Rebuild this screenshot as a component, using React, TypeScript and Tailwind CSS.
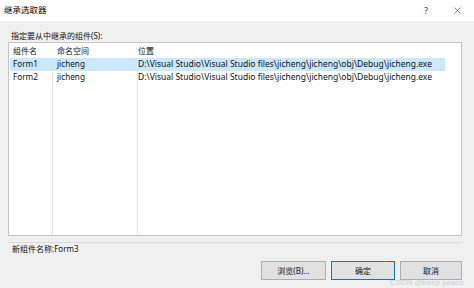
import { X } from 'lucide-react';

const rows = [
  { name: 'Form1', ns: 'jicheng', path: 'D:\\Visual Studio\\Visual Studio files\\jicheng\\jicheng\\obj\\Debug\\jicheng.exe', selected: true },
  { name: 'Form2', ns: 'jicheng', path: 'D:\\Visual Studio\\Visual Studio files\\jicheng\\jicheng\\obj\\Debug\\jicheng.exe', selected: false },
];

const font = "font-['Noto_Sans','Noto_Sans_CJK_SC',sans-serif]";

export default function App() {
  return (
    <div className={`w-[474px] h-[288px] flex flex-col bg-[#f0f0f0] text-[8px] text-[#111] ${font}`}>
      {/* title bar */}
      <div className="h-[21px] bg-white flex items-center pl-[4px] pr-[11px] shrink-0">
        <span className="text-[8.5px] text-black">继承选取器</span>
        <span className="ml-auto mr-[24px] text-[9px] text-[#333]">?</span>
        <X className="w-[11px] h-[11px] text-[#333]" strokeWidth={1.3} />
      </div>

      <div className="relative flex-1 flex flex-col pl-[8px] pr-[12px]">
        <div className="pt-[9px] pl-[3px] h-[21px] leading-[12px]">指定要从中继承的组件(S):</div>

        {/* list view */}
        <div className="relative h-[194px] bg-white border border-[#c4c4c4]">
          <div className="absolute top-0 bottom-0 left-[43px] w-px bg-[#e6e6e6]" />
          <div className="absolute top-0 bottom-0 left-[128px] w-px bg-[#e6e6e6]" />
          <div className="relative flex flex-col pl-[1px] w-[436px]">
            <div className="flex h-[15px] items-center bg-white leading-none">
              <div className="w-[42px] pl-[3px]">组件名</div>
              <div className="w-[85px] pl-[5px]">命名空间</div>
              <div className="flex-1 pl-[1px]">位置</div>
            </div>
            {rows.map((r) => (
              <div key={r.name} className={`flex h-[13px] items-center leading-none ${r.selected ? 'bg-[#cce8ff]' : ''}`}>
                <div className="w-[42px] pl-[3px] text-[8.2px]">{r.name}</div>
                <div className="w-[85px] pl-[5px] text-[8.2px]">{r.ns}</div>
                <div className="flex-1 pl-[1px] whitespace-nowrap text-[8.5px]">{r.path}</div>
              </div>
            ))}
          </div>
        </div>

        {/* status bar */}
        <div className="mt-[6px] h-[13px] border-t border-[#dcdcdc] flex items-center pl-[4px] leading-none">
          新组件名称:Form3
        </div>

        {/* buttons */}
        <div className="mt-[6px] flex justify-end gap-[5px]">
          <button className="w-[65px] h-[19px] bg-[#e1e1e1] border border-[#adadad] leading-none">浏览(B)...</button>
          <button className="w-[64px] h-[19px] bg-[#e1e1e1] border border-[#0078d7] leading-none">确定</button>
          <button className="w-[62px] h-[19px] bg-[#e1e1e1] border border-[#adadad] leading-none">取消</button>
        </div>

        <div className="absolute right-[10px] bottom-[1px] text-[8px] text-[#cfcfcf] leading-none font-['Liberation_Sans',sans-serif]">
          CSDN @keep peace
        </div>
      </div>
    </div>
  );
}
